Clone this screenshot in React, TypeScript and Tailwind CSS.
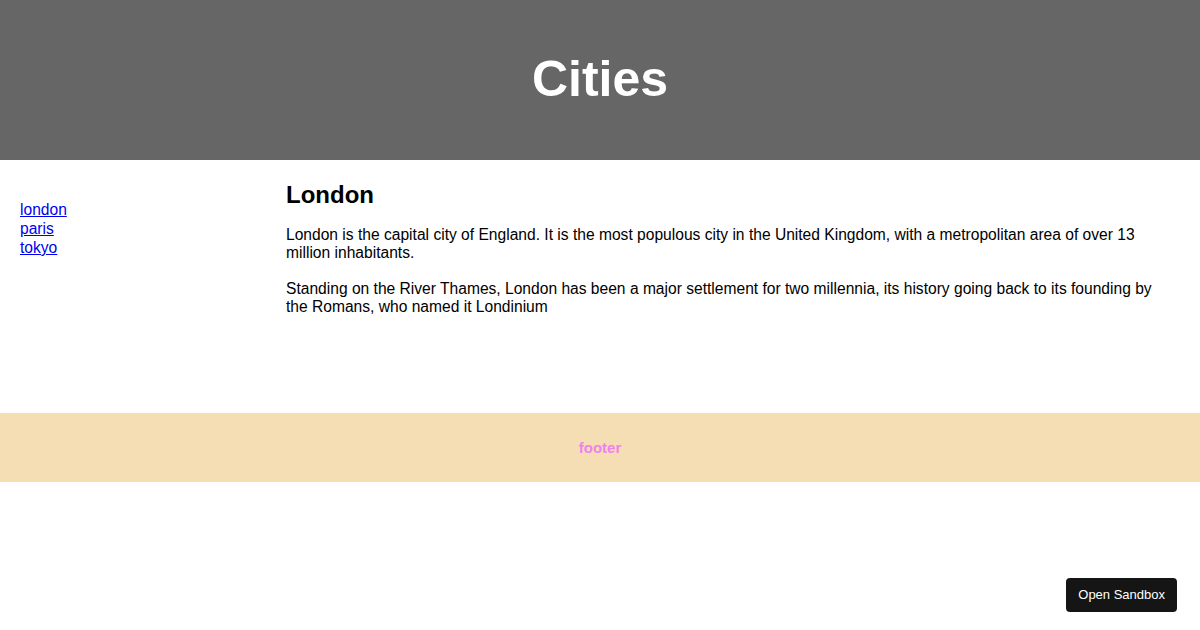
export default function App() {
  return (
    <div className="min-h-[630px] bg-white text-black" style={{ fontFamily: '"Liberation Sans", Arial, sans-serif' }}>
      <header className="h-[160px] bg-[#666666] flex items-center justify-center">
        <h1 className="text-white font-bold text-[50px] leading-none translate-y-[-1px]">Cities</h1>
      </header>
      <section className="flex h-[253px]">
        <nav className="w-[266px] shrink-0 pl-5 pt-[40px]">
          <ul className="text-[15.6px] leading-[19px]">
            <li><a href="#" className="text-[#0000ee] underline">london</a></li>
            <li><a href="#" className="text-[#0000ee] underline">paris</a></li>
            <li><a href="#" className="text-[#0000ee] underline">tokyo</a></li>
          </ul>
        </nav>
        <article className="flex-1 pt-[21px] pl-5 pr-10">
          <h2 className="text-[24px] font-bold leading-[27.6px]">London</h2>
          <p className="mt-[17px] text-[15.6px] leading-[18.6px]">
            London is the capital city of England. It is the most populous city in the United Kingdom, with a metropolitan area of over 13 million inhabitants.
          </p>
          <p className="mt-[17px] text-[15.6px] leading-[18.6px]">
            Standing on the River Thames, London has been a major settlement for two millennia, its history going back to its founding by the Romans, who named it Londinium
          </p>
        </article>
      </section>
      <footer className="h-[69px] bg-[#f5deb3] flex items-center justify-center">
        <p className="text-[#ee82ee] font-bold text-[15px] translate-y-[1px]">footer</p>
      </footer>
      <button className="fixed right-[23px] bottom-[18px] h-[34px] px-[12px] rounded-[4px] bg-[#151515] text-white text-[13px]">
        Open Sandbox
      </button>
    </div>
  );
}
